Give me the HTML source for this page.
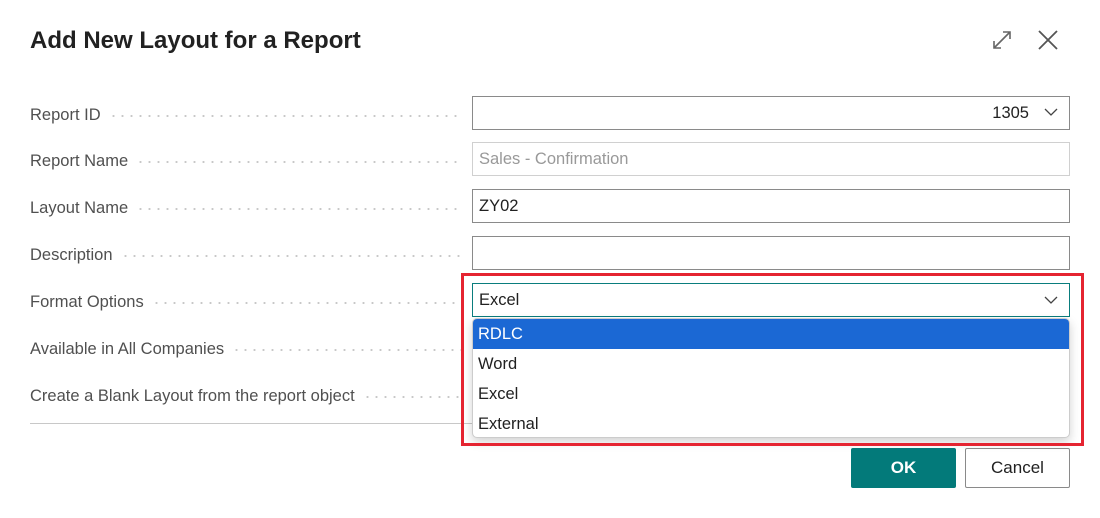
<!DOCTYPE html>
<html><head><style>
*{margin:0;padding:0;box-sizing:border-box}
body{width:1100px;height:518px;background:#fff;font-family:"Liberation Sans",sans-serif;position:relative;overflow:hidden;color:#212121}
.t{position:absolute;left:30px;top:27px;font-size:24px;color:#212121;font-weight:bold;letter-spacing:0px}
.lab{position:absolute;left:30px;width:432px;display:flex;align-items:center;font-size:16.5px;color:#505050;height:24px}
.lab span{white-space:nowrap;margin-right:8px}
.lab i{flex:1;height:2px;background-image:radial-gradient(circle,#c8c8c8 1px,transparent 1.2px);background-size:9px 2px;margin-top:2px}
.in{position:absolute;left:472px;width:598px;height:34px;border:1px solid #8a8a8a;font-size:16.5px;padding-left:6px;line-height:32px;background:#fff}
.dd{position:absolute;left:472px;top:318px;width:598px;height:120px;border:1px solid #ccc;border-radius:5px;background:#fff;box-shadow:0 4px 10px rgba(0,0,0,.18);overflow:hidden;font-size:16.5px}
.dd div{height:30px;line-height:30px;padding-left:5px}
.btn{position:absolute;top:448px;height:40px;width:105px;font-size:17px;text-align:center;line-height:38px}
</style></head><body>
<div class="t">Add New Layout for a Report</div>
<svg style="position:absolute;left:990px;top:28px" width="24" height="24" viewBox="0 0 24 24" fill="none" stroke="#666" stroke-width="1.6"><path d="M4 20L20 4M13 4h7v7M4 13v7h7"/></svg>
<svg style="position:absolute;left:1036px;top:28px" width="24" height="24" viewBox="0 0 24 24" stroke="#555" stroke-width="1.8"><path d="M3 3L21 21M21 3L3 21"/></svg>

<div class="lab" style="top:103px"><span>Report ID</span><i></i></div>
<div class="lab" style="top:149px"><span>Report Name</span><i></i></div>
<div class="lab" style="top:196px"><span>Layout Name</span><i></i></div>
<div class="lab" style="top:243px"><span>Description</span><i></i></div>
<div class="lab" style="top:290px"><span>Format Options</span><i></i></div>
<div class="lab" style="top:337px"><span>Available in All Companies</span><i></i></div>
<div class="lab" style="top:384px"><span>Create a Blank Layout from the report object</span><i></i></div>

<div class="in" style="top:96px;text-align:right;padding-right:40px">1305</div>
<svg style="position:absolute;left:1044px;top:107px" width="14" height="10" viewBox="0 0 14 10" fill="none" stroke="#444" stroke-width="1.3"><path d="M1 2l6 6 6-6"/></svg>
<div class="in" style="top:142px;border-color:#d0d0d0;color:#999">Sales - Confirmation</div>
<div class="in" style="top:189px">ZY02</div>
<div class="in" style="top:236px"></div>
<div style="position:absolute;left:30px;top:423px;width:1040px;height:1px;background:#c8c8c8"></div>
<div class="in" style="top:283px;height:34px;border-color:#0a7d7d">Excel</div>
<svg style="position:absolute;left:1044px;top:295px" width="14" height="10" viewBox="0 0 14 10" fill="none" stroke="#444" stroke-width="1.3"><path d="M1 2l6 6 6-6"/></svg>
<div class="dd"><div style="background:#1b68d4;color:#fff">RDLC</div><div>Word</div><div>Excel</div><div>External</div></div>
<div style="position:absolute;left:461px;top:273px;width:623px;height:173px;border:3px solid #e52431"></div>
<div class="btn" style="left:851px;background:#037a7a;color:#fff;border-radius:2px;font-weight:bold;line-height:40px">OK</div>
<div class="btn" style="left:965px;border:1px solid #8a8a8a;border-radius:2px">Cancel</div>
</body></html>
